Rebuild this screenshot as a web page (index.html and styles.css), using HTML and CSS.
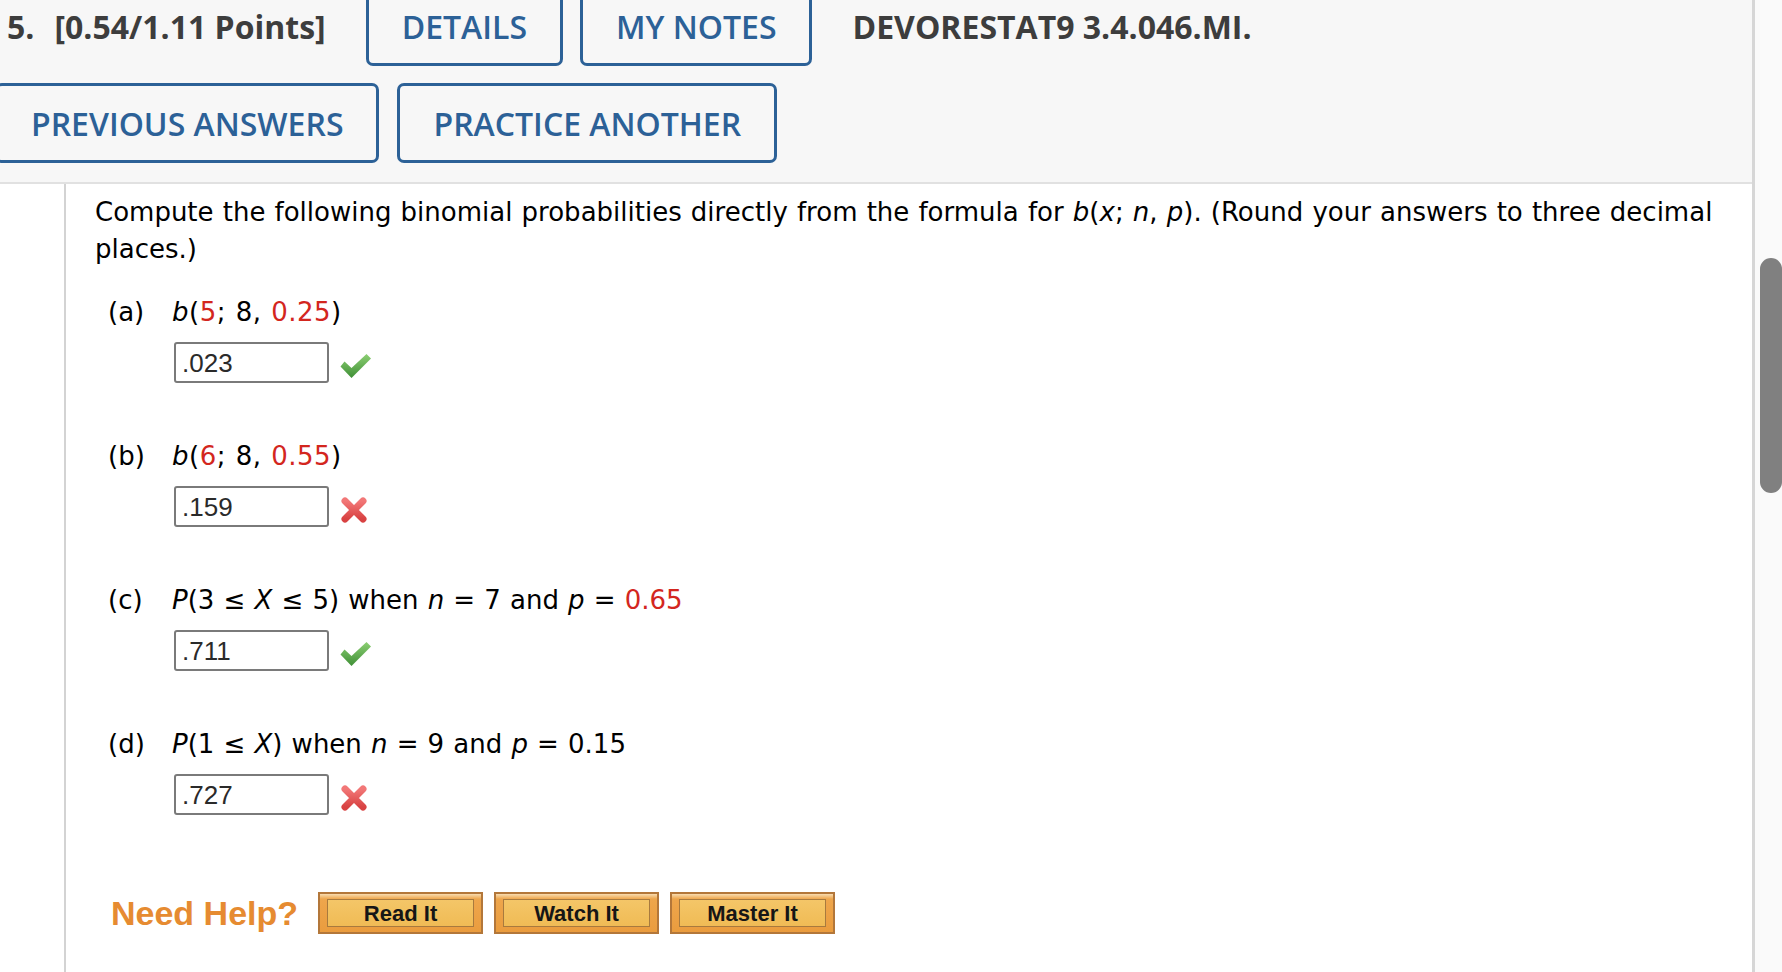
FILE: index.html
```html
<!DOCTYPE html>
<html lang="en">
<head>
<meta charset="utf-8">
<title>DEVORESTAT9 3.4.046.MI.</title>
<link rel="stylesheet" href="styles.css">
</head>
<body>
<div class="page">
  <div class="main">
    <header class="qhead">
      <div class="row row1">
        <div class="qtitle"><span class="qnum">5.</span><span>[0.54/1.11 Points]</span></div>
        <div class="btns">
          <a class="btn">DETAILS</a>
          <a class="btn">MY NOTES</a>
        </div>
        <div class="qcode">DEVORESTAT9 3.4.046.MI.</div>
      </div>
      <div class="row row2">
        <a class="btn">PREVIOUS ANSWERS</a>
        <a class="btn">PRACTICE ANOTHER</a>
      </div>
    </header>

    <section class="qbody">
      <div class="content">
        <p class="intro">Compute the following binomial probabilities directly from the formula for <i>b</i>(<i>x</i>; <i>n</i>, <i>p</i>). (Round your answers to three decimal places.)</p>

        <div class="part">
          <div class="pq"><span class="plabel">(a)</span><span class="expr"><i>b</i>(<span class="red">5</span>; 8, <span class="red">0.25</span>)</span></div>
          <div class="answer">
            <input class="ans" type="text" value=".023" readonly>
            <svg class="mark" width="32" height="26" viewBox="0 0 32 26"><defs><linearGradient id="gc1" x1="0" y1="0" x2="0" y2="1"><stop offset="0" stop-color="#8ccf73"/><stop offset="1" stop-color="#3f8f36"/></linearGradient></defs><path d="M0.5 13.5 L4.5 8.5 L11.5 15 L26.5 1 L31 5.5 L11.5 25 Z" fill="url(#gc1)"/></svg>
          </div>
        </div>

        <div class="part">
          <div class="pq"><span class="plabel">(b)</span><span class="expr"><i>b</i>(<span class="red">6</span>; 8, <span class="red">0.55</span>)</span></div>
          <div class="answer">
            <input class="ans" type="text" value=".159" readonly>
            <svg class="mark" width="28" height="28" viewBox="0 0 28 28"><defs><linearGradient id="gx1" x1="0" y1="0" x2="0" y2="1"><stop offset="0" stop-color="#f27777"/><stop offset="1" stop-color="#d84242"/></linearGradient></defs><path d="M5 5 L23 23 M23 5 L5 23" stroke="url(#gx1)" stroke-width="7" stroke-linecap="round"/></svg>
          </div>
        </div>

        <div class="part">
          <div class="pq"><span class="plabel">(c)</span><span><i>P</i>(3 ≤ <i>X</i> ≤ 5) when <i>n</i> = 7 and <i>p</i> = <span class="red">0.65</span></span></div>
          <div class="answer">
            <input class="ans" type="text" value=".711" readonly>
            <svg class="mark" width="32" height="26" viewBox="0 0 32 26"><defs><linearGradient id="gc2" x1="0" y1="0" x2="0" y2="1"><stop offset="0" stop-color="#8ccf73"/><stop offset="1" stop-color="#3f8f36"/></linearGradient></defs><path d="M0.5 13.5 L4.5 8.5 L11.5 15 L26.5 1 L31 5.5 L11.5 25 Z" fill="url(#gc2)"/></svg>
          </div>
        </div>

        <div class="part">
          <div class="pq"><span class="plabel">(d)</span><span><i>P</i>(1 ≤ <i>X</i>) when <i>n</i> = 9 and <i>p</i> = 0.15</span></div>
          <div class="answer">
            <input class="ans" type="text" value=".727" readonly>
            <svg class="mark" width="28" height="28" viewBox="0 0 28 28"><defs><linearGradient id="gx2" x1="0" y1="0" x2="0" y2="1"><stop offset="0" stop-color="#f27777"/><stop offset="1" stop-color="#d84242"/></linearGradient></defs><path d="M5 5 L23 23 M23 5 L5 23" stroke="url(#gx2)" stroke-width="7" stroke-linecap="round"/></svg>
          </div>
        </div>

        <div class="help">
          <span class="needhelp">Need Help?</span>
          <a class="hbtn"><span>Read It</span></a>
          <a class="hbtn"><span>Watch It</span></a>
          <a class="hbtn"><span>Master It</span></a>
        </div>
      </div>
    </section>
  </div>
  <div class="track"><div class="thumb"></div></div>
</div>
</body>
</html>
```
FILE: styles.css
```css
html, body {
  margin: 0;
  padding: 0;
  height: 100%;
  overflow: hidden;
  background: #ffffff;
}

.page {
  display: flex;
  height: 972px;
}

.main {
  width: 1752px;
  border-right: 3px solid #d6d6d6;
  display: flex;
  flex-direction: column;
  overflow: hidden;
}

/* ---------- header ---------- */
.qhead {
  background: #f7f7f7;
  border-bottom: 2px solid #e1e1e1;
  margin-top: -14px;
  padding: 0 0 19px 0;
  font-family: "Open Sans", "Liberation Sans", sans-serif;
  font-size: 32px;
}

.row {
  display: flex;
  align-items: center;
  height: 80px;
}

.row1 {
  padding-left: 7px;
}

.row2 {
  margin-top: 17px;
  margin-left: -5px;
  gap: 18px;
}

.qtitle {
  font-weight: 700;
  color: #3d3d3d;
  display: flex;
  gap: 20px;
  margin-right: 40px;
}

.btns {
  display: flex;
  gap: 17px;
}

.qcode {
  font-weight: 700;
  color: #3d3d3d;
  margin-left: 40px;
}

.btn {
  box-sizing: border-box;
  height: 80px;
  display: flex;
  align-items: center;
  padding: 0 33px;
  border: 3px solid #2c6197;
  border-radius: 7px;
  color: #2c6197;
  font-weight: 600;
  text-decoration: none;
}

/* ---------- body ---------- */
.qbody {
  flex: 1;
  background: #ffffff;
  padding-left: 64px;
  display: flex;
}

.content {
  flex: 1;
  border-left: 2px solid #d3d3d3;
  padding: 10px 29px 0 29px;
  font-family: Verdana, "DejaVu Sans", sans-serif;
  font-size: 26px;
  line-height: 37px;
  word-spacing: 0.9px;
  color: #000000;
}

.intro {
  margin: 0;
}

.red {
  color: #d3261e;
}

.expr {
  letter-spacing: 0.5px;
}

.part {
  margin-top: 55px;
}

.intro + .part {
  margin-top: 26px;
}

.pq {
  display: flex;
  padding-left: 13px;
}

.plabel {
  width: 64px;
  flex: none;
}

.answer {
  display: flex;
  align-items: center;
  margin-top: 11px;
  padding-left: 79px;
  height: 41px;
}

.ans {
  box-sizing: border-box;
  width: 155px;
  height: 41px;
  margin: 0;
  border: 2px solid #7a7a7a;
  border-radius: 3px;
  padding: 2px 6px 0 6px;
  font-family: Arial, "Liberation Sans", sans-serif;
  font-size: 26px;
  word-spacing: normal;
  color: #2a2a2a;
  background: #ffffff;
  outline: none;
}

.mark {
  margin-left: 11px;
  margin-top: 7px;
  flex: none;
}

/* ---------- help ---------- */
.help {
  display: flex;
  align-items: center;
  margin-top: 77px;
  padding-left: 16px;
  gap: 11px;
  word-spacing: normal;
}

.needhelp {
  font-family: Arial, "Liberation Sans", sans-serif;
  font-weight: 700;
  font-size: 34px;
  color: #e68b31;
  margin-right: 9px;
  line-height: 42px;
}

.hbtn {
  box-sizing: border-box;
  width: 165px;
  height: 42px;
  border: 2px solid #b3773a;
  background: linear-gradient(#f8dcb0 0, #eea64c 5px, #ea9c3e 100%);
  padding: 5px 7px 5px 7px;
  display: flex;
}

.hbtn span {
  flex: 1;
  display: flex;
  align-items: center;
  justify-content: center;
  border: 1px solid #a87a3e;
  background: linear-gradient(#f4c668, #f0bb55);
  font-family: Arial, "Liberation Sans", sans-serif;
  font-weight: 700;
  font-size: 22px;
  color: #161616;
}

/* ---------- scrollbar imitation ---------- */
.track {
  flex: 1;
  background: #fafafa;
  padding-top: 258px;
  display: flex;
  justify-content: flex-end;
}

.thumb {
  width: 22px;
  height: 235px;
  border-radius: 11px;
  background: #808080;
}
```
